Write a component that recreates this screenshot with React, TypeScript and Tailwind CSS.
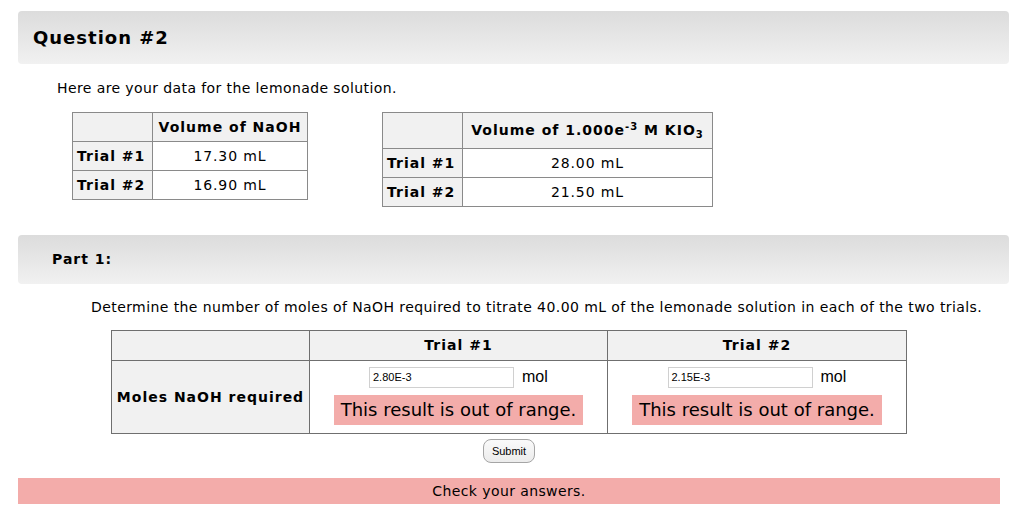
import React from "react";

const font = { fontFamily: "'DejaVu Sans', Verdana, sans-serif" };

function DataTable({
  heading,
  rows,
  width,
  headH,
}: {
  heading: React.ReactNode;
  rows: [string, string][];
  width: string;
  headH: string;
}) {
  return (
    <table className={`border-collapse border border-[#8a8a8a] text-[14px] ${width}`}>
      <thead>
        <tr className={headH}>
          <th className="w-[80px] border border-[#8a8a8a] bg-[#f1f1f1]"></th>
          <th className="border border-[#8a8a8a] bg-[#f1f1f1] px-1 font-bold tracking-[1px]">{heading}</th>
        </tr>
      </thead>
      <tbody>
        {rows.map(([label, value]) => (
          <tr key={label} className="h-[29px]">
            <th className="border border-[#8a8a8a] bg-[#f1f1f1] px-1 text-left font-bold tracking-[1px]">{label}</th>
            <td className="border border-[#8a8a8a] text-center tracking-[0.9px]">{value}</td>
          </tr>
        ))}
      </tbody>
    </table>
  );
}

function TrialCell({ value }: { value: string }) {
  return (
    <td className="border border-[#6f6f6f] pt-[4px] pb-[8px]">
      <div className="flex flex-col items-center">
        <div className="ml-[14px] flex items-center gap-[8px]">
          <div
            className="flex h-[21px] w-[145px] items-center border border-[#d0d0d0] bg-white px-[3px] text-[11px]"
            style={{ fontFamily: "Arial, 'Liberation Sans', sans-serif" }}
          >
            {value}
          </div>
          <span className="w-[40px] text-[16px]" style={{ fontFamily: "'Liberation Sans', Arial, sans-serif" }}>
            mol
          </span>
        </div>
        <div className="mt-[6px] bg-[#f3acaa] px-[7px] py-[3px] text-[18px] leading-[24px]">
          This result is out of range.
        </div>
      </div>
    </td>
  );
}

export default function App() {
  return (
    <div className="h-[521px] w-[1024px] overflow-hidden bg-white text-black" style={font}>
      <div className="px-[18px] pt-[11px]">
        <div className="flex h-[53px] w-[991px] items-center rounded-[4px] bg-gradient-to-b from-[#dcdcdc] to-[#f1f1f1] pl-[15px]">
          <h1 className="text-[18px] font-bold tracking-[1px]">Question #2</h1>
        </div>

        <p className="mt-[14px] ml-[39px] text-[14px] leading-[20px] tracking-[0.4px]">
          Here are your data for the lemonade solution.
        </p>

        <div className="mt-[14px] flex items-start">
          <div className="ml-[54px]">
            <DataTable
              heading="Volume of NaOH"
              width="w-[236px]"
              headH="h-[29px]"
              rows={[
                ["Trial #1", "17.30 mL"],
                ["Trial #2", "16.90 mL"],
              ]}
            />
          </div>
          <div className="ml-[74px]">
            <DataTable
              heading={
                <span>
                  Volume of 1.000e<sup className="text-[10px]">-3</sup> M KIO<sub className="text-[10px]">3</sub>
                </span>
              }
              width="w-[331px]"
              headH="h-[36px]"
              rows={[
                ["Trial #1", "28.00 mL"],
                ["Trial #2", "21.50 mL"],
              ]}
            />
          </div>
        </div>

        <div className="mt-[28px] flex h-[49px] w-[991px] items-center rounded-[4px] bg-gradient-to-b from-[#dcdcdc] to-[#f1f1f1] pl-[34px]">
          <h2 className="text-[14px] font-bold tracking-[1px]">Part 1:</h2>
        </div>

        <p className="mt-[13px] ml-[73px] text-[14px] leading-[20px] tracking-[0.42px]">
          Determine the number of moles of NaOH required to titrate 40.00 mL of the lemonade solution in each of the two trials.
        </p>

        <table className="mt-[13px] ml-[93px] w-[796px] border-collapse border border-[#6f6f6f] text-[14px]">
          <thead>
            <tr className="h-[30px]">
              <th className="w-[198px] border border-[#6f6f6f] bg-[#f1f1f1]"></th>
              <th className="w-[298px] border border-[#6f6f6f] bg-[#f1f1f1] font-bold tracking-[1px]">Trial #1</th>
              <th className="border border-[#6f6f6f] bg-[#f1f1f1] font-bold tracking-[1px]">Trial #2</th>
            </tr>
          </thead>
          <tbody>
            <tr>
              <th className="border border-[#6f6f6f] bg-[#f1f1f1] font-bold tracking-[1px]">Moles NaOH required</th>
              <TrialCell value="2.80E-3" />
              <TrialCell value="2.15E-3" />
            </tr>
          </tbody>
        </table>

        <div className="mt-[5px] flex justify-center pr-[6px]">
          <button
            className="h-[24px] rounded-[8px] border border-[#a5a5a5] bg-gradient-to-b from-[#fafafa] to-[#ececec] px-[8px] text-[11px]"
            style={{ fontFamily: "Arial, 'Liberation Sans', sans-serif" }}
          >
            Submit
          </button>
        </div>

        <div className="mt-[15px] flex h-[26px] w-[982px] items-center justify-center bg-[#f3acaa] text-[14px] tracking-[0.4px]">
          Check your answers.
        </div>
      </div>
    </div>
  );
}
